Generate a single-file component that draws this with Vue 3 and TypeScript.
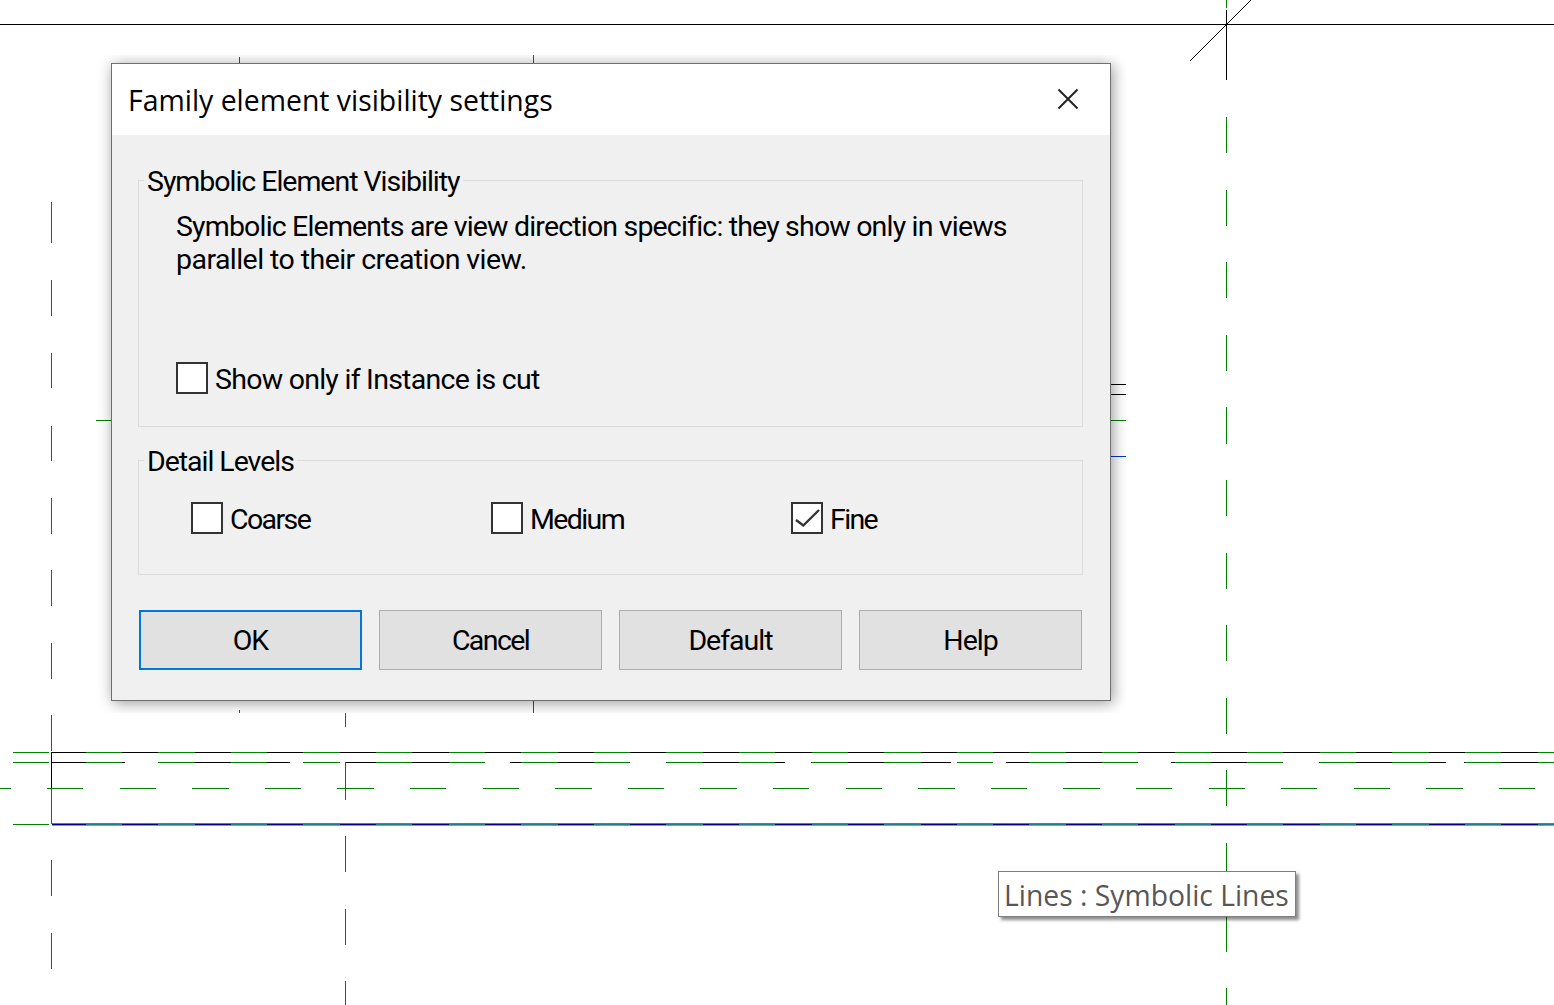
<script setup lang="ts">
interface Seg { a: number; b: number }

const W = 1554
const H = 1005
const PERIOD = 72.6
const DASH = 36.3

function dashes(start: number, end: number): Seg[] {
  const out: Seg[] = []
  for (let p = start; p < end; p += PERIOD) {
    out.push({ a: Math.max(0, Math.round(p)), b: Math.min(end, Math.round(p + DASH)) })
  }
  return out
}

const hBlackGapped: Seg[] = [
  { a: 52, b: 125 }, { a: 158, b: 290 }, { a: 345, b: 485 }, { a: 510, b: 630 },
  { a: 666, b: 785 }, { a: 811, b: 951 }, { a: 1006, b: 1138 }, { a: 1171, b: 1283 },
  { a: 1319, b: 1446 }, { a: 1464, b: 1554 },
]
const greenA = dashes(13, W)
const greenB = dashes(-25.6, W)
const tealOnBlue = greenA.filter((s) => s.a >= 52)
const col51: Seg[] = [
  { a: 202, b: 243 }, { a: 280, b: 316 }, { a: 353, b: 388 }, { a: 426, b: 461 },
  { a: 498, b: 534 }, { a: 570, b: 606 }, { a: 643, b: 679 }, { a: 715, b: 751 },
  { a: 788, b: 824 }, { a: 860, b: 896 }, { a: 933, b: 969 },
]
const col345: Seg[] = [
  { a: 713, b: 727 }, { a: 762, b: 800 }, { a: 836, b: 872 }, { a: 909, b: 945 }, { a: 981, b: H },
]
const col1226: Seg[] = [
  { a: 0, b: 8 }, { a: 117, b: 153 }, { a: 190, b: 226 }, { a: 262, b: 298 }, { a: 335, b: 371 },
  { a: 407, b: 444 }, { a: 480, b: 516 }, { a: 553, b: 589 }, { a: 625, b: 661 }, { a: 698, b: 734 },
  { a: 770, b: 806 }, { a: 843, b: 880 }, { a: 916, b: 952 }, { a: 988, b: H },
]
const stubs: { x: number; a: number; b: number }[] = [
  { x: 239, a: 57, b: 70 }, { x: 239, a: 710, b: 713 },
  { x: 533, a: 55, b: 70 }, { x: 533, a: 695, b: 713 },
]
const detailLevels = [
  { label: 'Coarse', checked: false },
  { label: 'Medium', checked: false },
  { label: 'Fine', checked: true },
]
const buttons = ['OK', 'Cancel', 'Default', 'Help']
</script>

<template>
  <div class="stage">
    <svg class="canvas" :width="W" :height="H" :viewBox="`0 0 ${W} ${H}`">
      <g class="crisp">
        <line x1="0" y1="24.5" :x2="W" y2="24.5" class="k" />
        <line x1="52" y1="752.5" :x2="W" y2="752.5" class="k" />
        <line v-for="s in hBlackGapped" :key="'k' + s.a" :x1="s.a" :x2="s.b" y1="762.5" y2="762.5" class="k" />
        <line x1="51.5" y1="752" x2="51.5" y2="788" class="k" />
        <line x1="345.5" y1="762" x2="345.5" y2="764" class="k" />
        <line x1="1226.5" y1="10" x2="1226.5" y2="80" class="k" />

        <template v-for="s in greenA" :key="'g' + s.a">
          <line :x1="s.a" :x2="s.b" y1="752.5" y2="752.5" class="g" />
          <line :x1="s.a" :x2="s.b" y1="762.5" y2="762.5" class="g" />
        </template>
        <line v-for="s in greenB" :key="'h' + s.a" :x1="s.a" :x2="s.b" y1="788.5" y2="788.5" class="g" />

        <line x1="13" x2="49" y1="824.5" y2="824.5" class="g" />
        <line x1="52" :x2="W" y1="823.5" y2="823.5" class="halo-top" />
        <line x1="52" :x2="W" y1="824.5" y2="824.5" class="navy" />
        <line x1="52" :x2="W" y1="825.5" y2="825.5" class="halo" />
        <line v-for="s in tealOnBlue" :key="'t' + s.a" :x1="s.a" :x2="s.b" y1="824.5" y2="824.5" class="teal" />

        <line v-for="s in col51" :key="'a' + s.a" x1="51.5" x2="51.5" :y1="s.a" :y2="s.b" class="g" />
        <line v-for="s in col345" :key="'b' + s.a" x1="345.5" x2="345.5" :y1="s.a" :y2="s.b" class="g" />
        <line v-for="s in col1226" :key="'c' + s.a" x1="1226.5" x2="1226.5" :y1="s.a" :y2="s.b" class="g" />
        <line v-for="s in stubs" :key="'s' + s.x + s.a" :x1="s.x + 0.5" :x2="s.x + 0.5" :y1="s.a" :y2="s.b" class="g" />

        <line x1="1000" x2="1126" y1="384.5" y2="384.5" class="k" />
        <line x1="1000" x2="1126" y1="394.5" y2="394.5" class="k" />
        <line x1="96" x2="1126" y1="420.5" y2="420.5" class="g" />
        <line x1="1000" x2="1126" y1="456.5" y2="456.5" class="b" />
      </g>
      <line x1="1190" y1="61" x2="1251" y2="0" class="k thin" />
    </svg>

    <div class="dialog-clip">
      <section class="dialog">
        <header class="titlebar">
          <h1 class="title">Family element visibility settings</h1>
          <svg class="close" width="22" height="22" viewBox="0 0 22 22">
            <path d="M1.5 1.5 L20.5 20.5 M20.5 1.5 L1.5 20.5" />
          </svg>
        </header>

        <div class="body">
          <fieldset class="group">
            <legend class="legend">Symbolic Element Visibility</legend>
            <div class="group-symbolic">
              <p class="desc">
                <span class="desc-first">Symbolic Elements are view direction specific: they show only in views</span>
                <span class="desc-second">parallel to their creation view.</span>
              </p>
              <label class="check">
                <span class="box"></span>
                <span class="check-label">Show only if Instance is cut</span>
              </label>
            </div>
          </fieldset>

          <fieldset class="group group-second">
            <legend class="legend">Detail Levels</legend>
            <div class="levels">
              <label v-for="d in detailLevels" :key="d.label" class="check">
                <span class="box">
                  <svg v-if="d.checked" width="28" height="28" viewBox="0 0 28 28">
                    <path d="M3 16 L10.3 21.5 L26 6" />
                  </svg>
                </span>
                <span class="check-label">{{ d.label }}</span>
              </label>
            </div>
          </fieldset>

          <div class="buttons">
            <button v-for="(b, i) in buttons" :key="b" class="btn" :class="{ primary: i === 0 }">{{ b }}</button>
          </div>
        </div>
      </section>
    </div>

    <div class="tooltip">Lines : Symbolic Lines</div>
  </div>
</template>

<style scoped>
.stage {
  position: relative;
  width: 1554px;
  height: 1005px;
  background: #fff;
  overflow: hidden;
  font-family: "Open Sans", "Noto Sans", sans-serif;
  color: #000;
}
.canvas { position: absolute; left: 0; top: 0; display: block; }
.crisp { shape-rendering: crispEdges; }
.canvas line { stroke-width: 1; }
.k { stroke: #000; }
.g { stroke: #008000; }
.b { stroke: #0033cc; }
.navy { stroke: #000080; }
.halo { stroke: #8494d8; }
.halo-top { stroke: #5a72c8; }
.teal { stroke: #1f7f8f; }

.dialog-clip {
  position: absolute;
  left: 96px;
  top: 55px;
  width: 1030px;
  height: 658px;
  padding: 8px 15px 12px 15px;
  box-sizing: border-box;
  overflow: hidden;
}
.dialog {
  width: 1000px;
  height: 638px;
  box-sizing: border-box;
  border: 1px solid #6f6f6f;
  background: #f0f0f0;
  box-shadow: 2px 2px 14px rgba(0, 0, 0, 0.4);
  display: flex;
  flex-direction: column;
}
.titlebar {
  height: 71px;
  flex: none;
  background: #fff;
  display: flex;
  align-items: flex-start;
  justify-content: space-between;
  padding: 0 31px 0 16px;
  box-sizing: border-box;
}
.title {
  margin: 0;
  padding-top: 16px;
  font-size: 28.4px;
  line-height: 40px;
  font-weight: 400;
}
.close { margin-top: 24px; }
.close path { fill: none; stroke: #222; stroke-width: 2; }

.body { padding: 26px 27px 30px 26px; flex: 1; }
.group {
  margin: 0;
  padding: 0;
  border: 1px solid #dcdcdc;
  min-width: 0;
}
.group-second { margin-top: 14px; }
.legend,
.desc,
.check-label,
.btn {
  font-family: Roboto, "Open Sans", sans-serif;
  font-size: 28.5px;
}
.legend {
  margin-left: 5px;
  padding: 4px 3px 0;
  line-height: 34px;
  letter-spacing: -1.03px;
}
.group-symbolic { padding: 11px 20px 28px 37px; }
.desc {
  margin: 0;
  line-height: 33px;
  white-space: nowrap;
}
.desc-first { display: block; letter-spacing: -0.82px; }
.desc-second { display: block; letter-spacing: -0.56px; }
.check { display: flex; align-items: flex-start; gap: 7px; }
.group-symbolic .check { margin-top: 86px; }
.group-symbolic .check-label { letter-spacing: -0.74px; }
.box {
  width: 32px;
  height: 32px;
  box-sizing: border-box;
  border: 2px solid #333;
  background: #fff;
  flex: none;
  display: block;
}
.box svg { display: block; }
.box path { fill: none; stroke: #333; stroke-width: 2.4; }
.check-label { line-height: 36px; }
.levels {
  display: grid;
  grid-template-columns: repeat(3, 300px);
  padding: 23px 0 36px 52px;
}
.levels .check-label { letter-spacing: -1.6px; }
.buttons { display: flex; gap: 17px; margin-top: 35px; padding-left: 1px; }
.btn {
  width: 223px;
  height: 60px;
  box-sizing: border-box;
  border: 1px solid #adadad;
  background: #e1e1e1;
  color: #000;
  padding: 0;
  letter-spacing: -1px;
}
.btn:nth-child(2) { letter-spacing: -1.6px; }
.btn.primary { border: 2px solid #0078d7; }
.tooltip {
  position: absolute;
  left: 998px;
  top: 871px;
  width: 298px;
  height: 46px;
  box-sizing: border-box;
  border: 1px solid #7f7f7f;
  background: #fff;
  box-shadow: 3px 3px 3px rgba(0, 0, 0, 0.45);
  color: #575757;
  font-size: 28.3px;
  line-height: 46px;
  padding-left: 5px;
  white-space: nowrap;
}
</style>

<style>
html, body { margin: 0; background: #fff; overflow: hidden; }
</style>
